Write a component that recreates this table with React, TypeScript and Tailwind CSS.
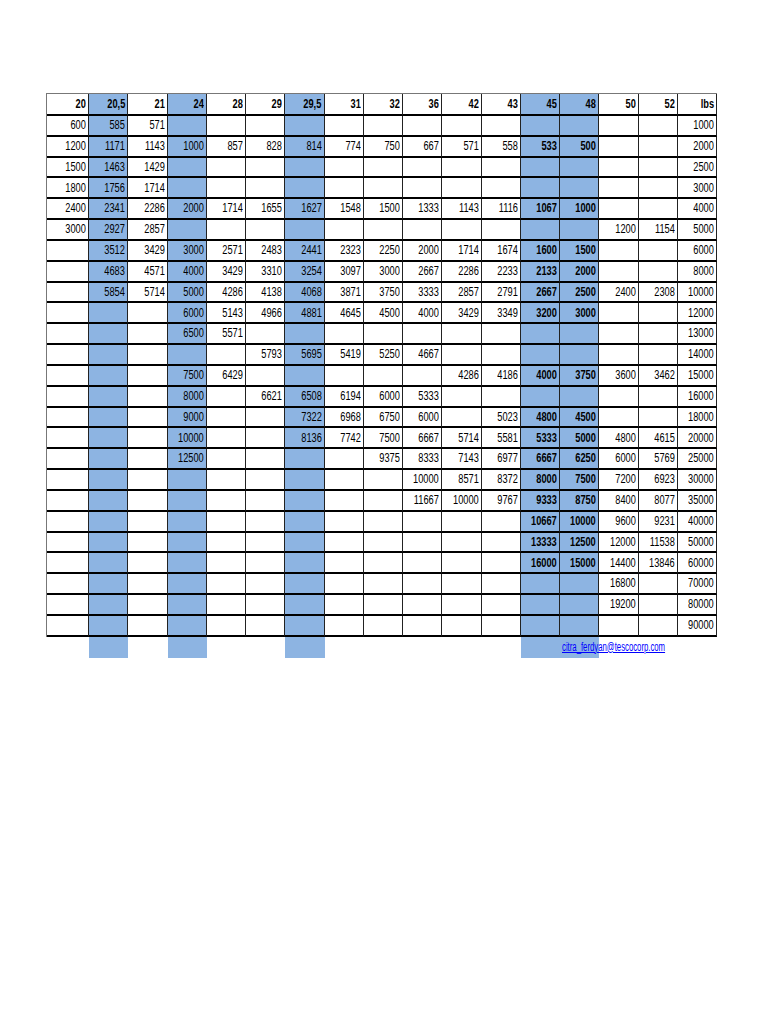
const headers = ["20", "20,5", "21", "24", "28", "29", "29,5", "31", "32", "36", "42", "43", "45", "48", "50", "52", "lbs"];

// columns shaded blue in the sheet
const blueCols = [1, 3, 6, 12, 13];
// columns printed in bold
const boldCols = [12, 13];

const rows: string[][] = [
  ["600", "585", "571", "", "", "", "", "", "", "", "", "", "", "", "", "", "1000"],
  ["1200", "1171", "1143", "1000", "857", "828", "814", "774", "750", "667", "571", "558", "533", "500", "", "", "2000"],
  ["1500", "1463", "1429", "", "", "", "", "", "", "", "", "", "", "", "", "", "2500"],
  ["1800", "1756", "1714", "", "", "", "", "", "", "", "", "", "", "", "", "", "3000"],
  ["2400", "2341", "2286", "2000", "1714", "1655", "1627", "1548", "1500", "1333", "1143", "1116", "1067", "1000", "", "", "4000"],
  ["3000", "2927", "2857", "", "", "", "", "", "", "", "", "", "", "", "1200", "1154", "5000"],
  ["", "3512", "3429", "3000", "2571", "2483", "2441", "2323", "2250", "2000", "1714", "1674", "1600", "1500", "", "", "6000"],
  ["", "4683", "4571", "4000", "3429", "3310", "3254", "3097", "3000", "2667", "2286", "2233", "2133", "2000", "", "", "8000"],
  ["", "5854", "5714", "5000", "4286", "4138", "4068", "3871", "3750", "3333", "2857", "2791", "2667", "2500", "2400", "2308", "10000"],
  ["", "", "", "6000", "5143", "4966", "4881", "4645", "4500", "4000", "3429", "3349", "3200", "3000", "", "", "12000"],
  ["", "", "", "6500", "5571", "", "", "", "", "", "", "", "", "", "", "", "13000"],
  ["", "", "", "", "", "5793", "5695", "5419", "5250", "4667", "", "", "", "", "", "", "14000"],
  ["", "", "", "7500", "6429", "", "", "", "", "", "4286", "4186", "4000", "3750", "3600", "3462", "15000"],
  ["", "", "", "8000", "", "6621", "6508", "6194", "6000", "5333", "", "", "", "", "", "", "16000"],
  ["", "", "", "9000", "", "", "7322", "6968", "6750", "6000", "", "5023", "4800", "4500", "", "", "18000"],
  ["", "", "", "10000", "", "", "8136", "7742", "7500", "6667", "5714", "5581", "5333", "5000", "4800", "4615", "20000"],
  ["", "", "", "12500", "", "", "", "", "9375", "8333", "7143", "6977", "6667", "6250", "6000", "5769", "25000"],
  ["", "", "", "", "", "", "", "", "", "10000", "8571", "8372", "8000", "7500", "7200", "6923", "30000"],
  ["", "", "", "", "", "", "", "", "", "11667", "10000", "9767", "9333", "8750", "8400", "8077", "35000"],
  ["", "", "", "", "", "", "", "", "", "", "", "", "10667", "10000", "9600", "9231", "40000"],
  ["", "", "", "", "", "", "", "", "", "", "", "", "13333", "12500", "12000", "11538", "50000"],
  ["", "", "", "", "", "", "", "", "", "", "", "", "16000", "15000", "14400", "13846", "60000"],
  ["", "", "", "", "", "", "", "", "", "", "", "", "", "", "16800", "", "70000"],
  ["", "", "", "", "", "", "", "", "", "", "", "", "", "", "19200", "", "80000"],
  ["", "", "", "", "", "", "", "", "", "", "", "", "", "", "", "", "90000"],
];

const colWidth = (i: number) => (i === 0 ? "w-[42px]" : "w-[39.25px]");

const Cell = ({ i, value, bold }: { i: number; value: string; bold?: boolean }) => (
  <div
    className={`${colWidth(i)} shrink-0 h-full flex items-center justify-end pr-[2px] border-r border-r-[#222] border-b-2 border-b-black ${
      blueCols.includes(i) ? "bg-[#8db4e2]" : "bg-white"
    } ${bold ? "font-bold" : ""}`}
  >
    {/* the sheet font is a narrow one, squeeze the text to match */}
    <span className="inline-block whitespace-nowrap origin-right [transform:scaleX(0.74)]">{value}</span>
  </div>
);

export default function App() {
  return (
    <div className="w-[768px] h-[1024px] bg-white pt-[93px] pl-[46px] text-black text-[12.5px] leading-none [font-family:'Liberation_Sans',Arial,sans-serif]">
      <div className="w-fit border-t border-l border-[#777]">
        <div className="flex h-[22px]">
          {headers.map((h, i) => (
            <Cell key={i} i={i} value={h} bold />
          ))}
        </div>
        {rows.map((r, ri) => (
          <div key={ri} className="flex h-[20.84px]">
            {r.map((v, i) => (
              <Cell key={i} i={i} value={v} bold={boldCols.includes(i)} />
            ))}
          </div>
        ))}
      </div>
      <div className="flex h-[21px] ml-[1px]">
        {headers.map((_, i) => (
          <div
            key={i}
            className={`${colWidth(i)} shrink-0 h-full ${blueCols.includes(i) ? "bg-[#8db4e2]" : ""} ${
              i === 13 ? "relative" : ""
            }`}
          >
            {i === 13 && (
              <a
                href="#"
                className="absolute left-[2px] top-[4px] whitespace-nowrap text-[#0000ff] underline origin-left [transform:scaleX(0.62)]"
              >
                citra_ferdyan@tescocorp.com
              </a>
            )}
          </div>
        ))}
      </div>
    </div>
  );
}
